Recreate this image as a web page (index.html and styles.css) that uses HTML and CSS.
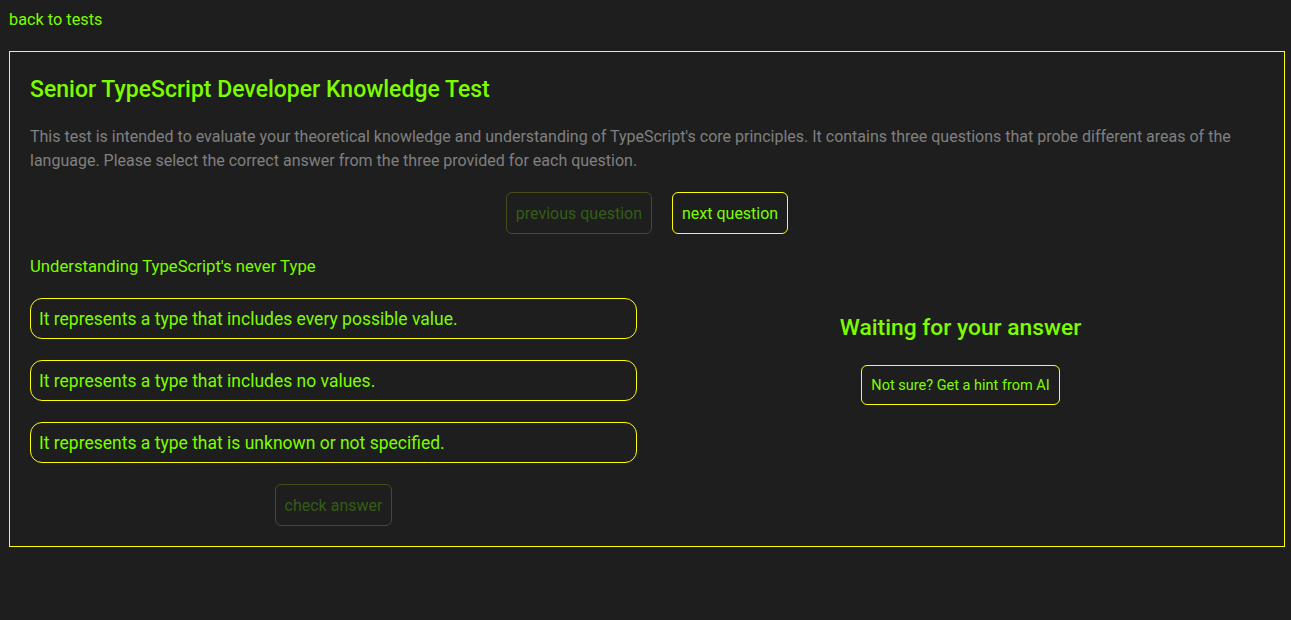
FILE: index.html
```html
<!DOCTYPE html>
<html>
<head>
	<meta name="viewport" content="width=device-width, initial-scale=1">
	<title>Senior TypeScript Developer Knowledge Test</title>
	<link rel="stylesheet" href="styles.css">
</head>
<body>
	<a class="back-link" href="#">back to tests</a>

	<div class="test-box">
		<h1 class="test-title">Senior TypeScript Developer Knowledge Test</h1>
		<p class="test-description">This test is intended to evaluate your theoretical knowledge and understanding of TypeScript's core principles. It contains three questions that probe different areas of the language. Please select the correct answer from the three provided for each question.</p>

		<div class="nav-buttons">
			<button class="btn" disabled>previous question</button>
			<button class="btn">next question</button>
		</div>

		<h3 class="question-title">Understanding TypeScript's never Type</h3>

		<div class="question-grid">
			<div class="answers">
				<button class="answer">It represents a type that includes every possible value.</button>
				<button class="answer">It represents a type that includes no values.</button>
				<button class="answer">It represents a type that is unknown or not specified.</button>
				<button class="btn check-btn" disabled>check answer</button>
			</div>
			<div class="result">
				<h2 class="result-title">Waiting for your answer</h2>
				<button class="btn hint-btn">Not sure? Get a hint from AI</button>
			</div>
		</div>
	</div>
</body>
</html>
```

FILE: styles.css
```css
body {
	font-family: Roboto, "Noto Sans", sans-serif;
	background-color: #1e1e1e;
	color: #7cfc00;
	margin: 0;
	padding: 10px 6px 0 9px;
}
.back-link {
	display: block;
	color: #7cfc00;
	text-decoration: none;
	font-size: 16.3px;
	line-height: 20px;
}
.test-box {
	margin-top: 21px;
	border: 1px solid #ffff00;
	padding: 20px;
}
.test-title {
	font-size: 23px;
	font-weight: 500;
	line-height: 26px;
	margin: 5px 0 0;
}
.test-description {
	color: #808080;
	font-size: 16px;
	line-height: 24px;
	margin: 22px 0 0;
}
.nav-buttons {
	display: flex;
	justify-content: center;
	gap: 20px;
	margin-top: 19px;
}
.btn {
	font-family: inherit;
	font-size: 16px;
	height: 42px;
	padding: 0 9px;
	background-color: transparent;
	color: #7cfc00;
	border: 1px solid #ffff00;
	border-radius: 6px;
	cursor: pointer;
}
.btn:disabled {
	color: #335d17;
	border-color: #4a4a1c;
	cursor: default;
}
.question-title {
	font-size: 16.7px;
	font-weight: 400;
	line-height: 20px;
	margin: 23px 0 0;
}
.question-grid {
	display: grid;
	grid-template-columns: 1fr 1fr;
	gap: 20px;
	margin-top: 21px;
}
.answers {
	display: flex;
	flex-direction: column;
	gap: 21px;
}
.answer {
	font-family: inherit;
	font-size: 17.5px;
	height: 41px;
	padding: 0 8px;
	text-align: left;
	background-color: transparent;
	color: #7cfc00;
	border: 1px solid #ffff00;
	border-radius: 12px;
	cursor: pointer;
}
.check-btn {
	align-self: center;
}
.result {
	display: flex;
	flex-direction: column;
	align-items: center;
	padding-top: 17px;
}
.result-title {
	font-size: 22.8px;
	font-weight: 500;
	line-height: 26px;
	margin: 0;
}
.hint-btn {
	font-size: 14.5px;
	height: 40px;
	margin-top: 24px;
}
```
